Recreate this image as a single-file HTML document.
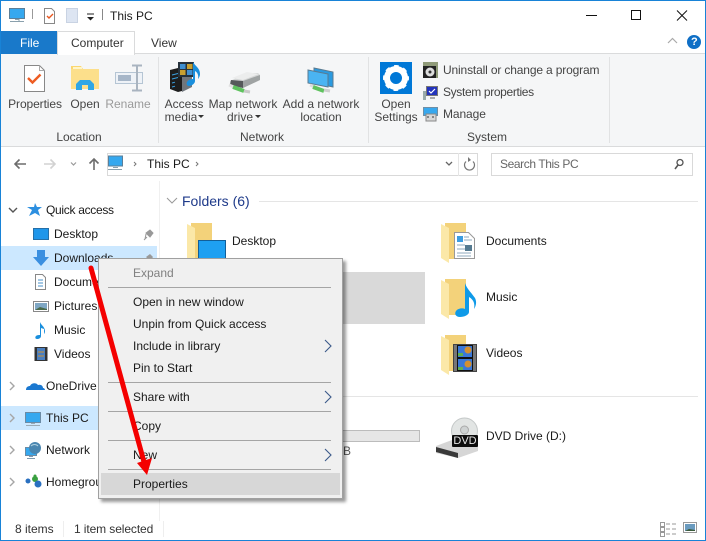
<!DOCTYPE html>
<html><head><meta charset="utf-8"><style>
html,body{margin:0;padding:0;background:#fff}
#w{position:relative;width:706px;height:541px;overflow:hidden;background:#fff;font:12px/16px "Liberation Sans",sans-serif;color:#1a1a1a}
.t{position:absolute;white-space:nowrap}
.c{position:absolute;white-space:nowrap;text-align:center;transform:translateX(-50%)}
.r{color:#444}
.b{position:absolute}
svg{position:absolute;left:0;top:0}
</style></head><body><div id="w">

<!-- ribbon backgrounds -->
<div class="b" style="left:0;top:54px;width:706px;height:92px;background:#f5f6f7;border-bottom:1px solid #dadbdc;border-top:1px solid #dadbdc;box-sizing:content-box;margin-top:-1px"></div>
<div class="b" style="left:1px;top:31px;width:56px;height:23px;background:#1979ca"></div>
<div class="b" style="left:57px;top:31px;width:78px;height:24px;background:#f5f6f7;border:1px solid #dadbdc;border-bottom:0;box-sizing:border-box"></div>
<div class="b" style="left:58px;top:32px;width:76px;height:23px;background:#fff"></div>
<div class="b" style="left:158px;top:57px;width:1px;height:86px;background:#e1e2e3"></div>
<div class="b" style="left:368px;top:57px;width:1px;height:86px;background:#e1e2e3"></div>
<div class="b" style="left:609px;top:57px;width:1px;height:86px;background:#e1e2e3"></div>

<!-- address bar -->
<div class="b" style="left:107px;top:153px;width:371px;height:22px;border:1px solid #d9d9d9;box-sizing:border-box;height:23px"></div>
<div class="b" style="left:458px;top:153px;width:1px;height:23px;background:#e5e5e5"></div>
<div class="b" style="left:491px;top:153px;width:202px;height:23px;border:1px solid #d9d9d9;box-sizing:border-box"></div>

<!-- nav selection -->
<div class="b" style="left:1px;top:246px;width:156px;height:24px;background:#cce8ff"></div>
<div class="b" style="left:1px;top:406px;width:156px;height:24px;background:#cce8ff"></div>
<div class="b" style="left:159px;top:181px;width:1px;height:340px;background:#f0f0f0"></div>

<!-- content -->
<div class="b" style="left:343px;top:272px;width:82px;height:52px;background:#d9d9d9"></div>
<div class="b" style="left:259px;top:201px;width:439px;height:1px;background:#e5e5e5"></div>
<div class="b" style="left:300px;top:396px;width:398px;height:1px;background:#e5e5e5"></div>
<div class="b" style="left:300px;top:430px;width:120px;height:12px;background:#e6e6e6;border:1px solid #bcbcbc;box-sizing:border-box"></div>
<div class="t" style="left:343px;top:443px;color:#555">B</div>

<svg width="706" height="541" viewBox="0 0 706 541" fill="none">
 <!-- title bar icons -->
 <rect x="9.5" y="8.5" width="15" height="10" fill="#35a8ef" stroke="#5b7f99"/>
 <path d="M15 19.5h4v1.5M10 21.500h14" stroke="#8aa0ad"/>
 <path d="M32.5 9v10" stroke="#999"/>
 <path d="M44.5 8.5h7l3 3v12h-10z" fill="#fff" stroke="#888"/>
 <path d="M47 16l2 2 4-4" stroke="#e8561f" stroke-width="1.4"/>
 <rect x="66.5" y="8.5" width="11" height="14" fill="#dde5f2" stroke="#c9d3e3"/>
 <path d="M87 14h7" stroke="#222"/><path d="M87 17h7l-3.5 3.5z" fill="#222"/>
 <path d="M102.5 9v11" stroke="#888"/>
 <!-- window controls -->
 <path d="M586 15.5h11" stroke="#111"/>
 <rect x="631.5" y="10.5" width="9" height="9" stroke="#111"/>
 <path d="M677 10.5l10 10M687 10.5l-10 10" stroke="#111"/>
 <path d="M668 43l4.5-4.5L677 43" stroke="#aaa" stroke-width="1.2"/>
 <circle cx="694" cy="42" r="7" fill="#0f6fc6"/>

 <!-- Properties -->
 <path d="M24.5 65.5h15l5 5v21h-20z" fill="#fff" stroke="#888"/>
 <path d="M39.5 65.5v5h5" stroke="#aaa"/>
 <path d="M28 78l4.500 4.500 8-8" stroke="#ee5c22" stroke-width="2.400"/>
 <!-- Open -->
 <path d="M71 66h10l2 3h16v20H71z" fill="#fbd770"/>
 <rect x="71" y="69" width="28" height="20" fill="#fcdf8b"/>
 <rect x="73" y="67" width="9" height="2" fill="#fff5c9"/>
 <path d="M76 90v-6l4-4h10l4 4v6h-6v-5h-6v5z" fill="#2ea6e6"/>
 <!-- Rename -->
 <rect x="115.500" y="72.500" width="27" height="11" fill="#eef2f7" stroke="#b5c5d4"/>
 <rect x="118" y="75" width="13" height="6" fill="#a6b6c8"/>
 <path d="M132 65.500h10M132 90.500h10M137 65.500v25" stroke="#a9b4c0" stroke-width="2"/>
 <!-- Access media -->
 <path d="M170 70l12-3v24l-4 1-8-3z" fill="#1d1d1d"/>
 <path d="M182 67l10 3v17l-10 5z" fill="#70767c"/>
 <rect x="178" y="62" width="16" height="15" fill="#26323c"/>
 <rect x="180" y="64" width="5.500" height="5" fill="#3f8fd0"/><rect x="187" y="64" width="5.500" height="5" fill="#c8a030"/>
 <rect x="180" y="70" width="5.500" height="5" fill="#c8a030"/><rect x="187" y="70" width="5.500" height="5" fill="#3f8fd0"/>
 <path d="M193 62c2 4 7 6 7 12 0 3-2 5-2 5 1-4-1-7-3-8v10c0 3-4 5-6 5s-3-2-2-4 4-3 6-3z" fill="#1a8fdd"/>
 <path d="M172 75l6-1.500M172 79l6-1.500M172 83l3-.8M172 87l3-.8" stroke="#3aa0e0"/>
 <!-- Map network drive -->
 <path d="M230 81l17-8h11l2 2v5l-17 8-13-3z" fill="#d4d6d6"/>
 <path d="M232 78l15-6 12 2-16 6z" fill="#eceded"/>
 <path d="M231 80l12 1v7l-13-3z" fill="#55595a"/>
 <path d="M243 81l17-6v5l-17 8z" fill="#9fa3a3"/>
 <path d="M229 85l5 2" stroke="#e0e0e0" stroke-width="3"/>
 <path d="M233 87l11 4" stroke="#5fc25f" stroke-width="4"/>
 <path d="M244 91l6 1" stroke="#c9c9c9" stroke-width="3"/>
 <!-- Add a network location -->
 <path d="M314 68l19 4v15l-19-4z" fill="#2a9ae0" stroke="#5a7a90"/>
 <path d="M308 70l20 4v13l-20-4z" fill="#4ab4f2" stroke="#5a7a90"/>
 <path d="M310 85l5 2" stroke="#dcdcdc" stroke-width="3"/>
 <path d="M313 87l11 4" stroke="#5fc25f" stroke-width="4"/>
 <path d="M324 90l6 1" stroke="#cfcfcf" stroke-width="3"/>
 <!-- Gear -->
 <rect x="380" y="62" width="32" height="32" fill="#0078d7"/>
 <circle cx="396" cy="78" r="9" stroke="#fff" stroke-width="6"/>
 <circle cx="396" cy="78" r="11.500" stroke="#fff" stroke-width="3" stroke-dasharray="4.500 4.530" stroke-dashoffset="2.200"/>
 <!-- uninstall -->
 <rect x="423" y="62" width="15" height="16" fill="#8f9a78"/>
 <rect x="423" y="66" width="13" height="12" fill="#222"/>
 <circle cx="430" cy="72" r="4.500" fill="#ddd"/><circle cx="430" cy="72" r="1.500" fill="#333"/>
 <!-- system props -->
 <rect x="426.500" y="86.500" width="11" height="9" fill="#2233bb" stroke="#777"/>
 <path d="M429 91l2 2 4-4" stroke="#fff" stroke-width="1.200"/>
 <rect x="423" y="91" width="3" height="9" fill="#9aa"/>
 <path d="M430 97h5v2h-5z" fill="#aaa"/>
 <!-- manage -->
 <rect x="423.500" y="107.500" width="14" height="8" fill="#38a8ee" stroke="#6f8ea5"/>
 <rect x="426" y="114" width="10" height="7" fill="#d8d8d8" stroke="#888"/>
 <path d="M428 116v2M433 116v2" stroke="#333"/>

 <!-- nav arrows -->
 <path d="M15 164h11M19.500 159.500l-4.500 4.500 4.500 4.500" stroke="#6d6d6d" stroke-width="1.600"/>
 <path d="M55 164H44M50.500 159.500l4.500 4.500-4.500 4.500" stroke="#d2d2d2" stroke-width="1.600"/>
 <path d="M71 162.500l2.500 2.500 2.500-2.500" stroke="#9a9a9a" stroke-width="1.200"/>
 <path d="M94 170V159M89.500 163.500l4.500-4.500 4.500 4.500" stroke="#6d6d6d" stroke-width="1.600"/>
 <!-- address -->
 <rect x="108.500" y="156" width="14" height="10" fill="#35a8ef" stroke="#5b7f99"/>
 <path d="M113 167.500h5M108 169.500h14" stroke="#8aa0ad"/>
 <path d="M134 162l2 2-2 2M196 162l2 2-2 2" stroke="#777"/>
 <path d="M446 162l3 3 3-3" stroke="#666" stroke-width="1.300"/>
 <path d="M473 161.500a5 5 0 1 1-7 0" stroke="#777" stroke-width="1.200"/><path d="M468 157l3 3-3 2z" fill="#777"/>
 <circle cx="680" cy="162.500" r="3" stroke="#555" stroke-width="1.300"/><path d="M678 165l-3 4" stroke="#555" stroke-width="1.600"/>

 <!-- nav chevrons -->
 <path d="M9 208l4 4 4-4" stroke="#555" stroke-width="1.400"/>
 <path d="M10 382l4 4-4 4M10 414l4 4-4 4M10 446l4 4-4 4M10 478l4 4-4 4" stroke="#a6a6a6" stroke-width="1.400"/>
 <!-- nav icons -->
 <path d="M35 203l-1 4-7 0 5 3-3 6 6-3 5 3-2-6 4-3h-5z" fill="#2c8fe0"/>
 <rect x="33.500" y="228.500" width="15" height="11" fill="#1f96ea" stroke="#256fa8"/>
 <path d="M37 250h8v7h4l-8 9-8-9h4z" fill="#3a8fe0"/>
 <path d="M35.500 274.500h7l3 3v12h-10z" fill="#fff" stroke="#888"/><path d="M38 280h5M38 283h5M38 286h5" stroke="#4a90c8"/>
 <rect x="33.500" y="301.500" width="15" height="10" fill="#fff" stroke="#888"/><rect x="35" y="303" width="12" height="7" fill="#7fa7c4"/><path d="M35 310l5-3 7 2v1z" fill="#4a6a4a"/>
 <path d="M40 322c1 3 5 5 5 9 0 2-1 3-1 3v-5l-3-1v8c0 2-2 3-4 3s-2-2-1-3 3-1 4-1z" fill="#1a8fdd"/>
 <rect x="34.500" y="347" width="13" height="14" fill="#333"/><rect x="37" y="348" width="8" height="12" fill="#4a7fc0"/><path d="M38 352h6M38 356h6" stroke="#d09030"/>
 <path d="M26 390c0-3 2-4 4-4 1-3 6-4 8-1 3-1 5 1 5 3 1 0 2 1 2 2z" fill="#1a78d0"/>
 <rect x="25.500" y="412.500" width="15" height="10" fill="#35a8ef" stroke="#6b8ba5"/><path d="M31 423.500h4M26 425.500h14" stroke="#9aaab5"/>
 <rect x="25.500" y="447.500" width="11" height="8" fill="#35a8ef" stroke="#6b8ba5"/><path d="M29 456.500h4M27 458.500h8" stroke="#7d9ab0"/><circle cx="35" cy="448" r="6" fill="#4a86b0"/><path d="M31 446c2-2 5-2 7 0" stroke="#aed0e0"/>
 <circle cx="28" cy="481" r="2.500" fill="#2a70c0"/><circle cx="35" cy="479" r="3" fill="#3aa040"/><circle cx="38" cy="484" r="3.500" fill="#2a70c0"/><circle cx="35" cy="476" r="1.500" fill="#3aa040"/>
 <!-- pins -->
 <path d="M146 233l4-3 3 3-3 4zM146 234l-1 5M147 237l-3 3" fill="#999" stroke="#999"/>
 <path d="M146 257l4-3 3 3-3 4z" fill="#999"/>

 <!-- folders -->
 <rect x="191" y="223" width="21" height="36" fill="#f3d27a"/><path d="M187 224l8 4v37l-8-5z" fill="#fbe8a8"/>
 <rect x="198.500" y="240.500" width="27" height="22" fill="#1ea0f2" stroke="#125f99"/>
 <rect x="445" y="223" width="21" height="36" fill="#f3d27a"/><path d="M441 224l8 4v35l-8-5z" fill="#fbe8a8"/>
 <path d="M454.500 232.500h14l6 6v20h-20z" fill="#fff" stroke="#999"/>
 <path d="M457 236h6v6h-6z" fill="#3c9ce0"/><path d="M464 237h5M464 240h8M457 245h8M457 249h8M457 253h14M457 256h14" stroke="#8fa8bc"/><rect x="465" y="245" width="7" height="6" fill="#557a90"/>
 <rect x="445" y="279" width="21" height="36" fill="#f3d27a"/><path d="M441 280l8 4v35l-8-5z" fill="#fbe8a8"/>
 <path d="M465 283c2 6 5 8 10 15 2 4 1 8-1 11 1-5 0-9-5-12v15c0 3-5 5-9 5s-6-3-4-6 7-3 9-2z" fill="#0f9ae8"/>
 <rect x="445" y="335" width="21" height="36" fill="#f3d27a"/><path d="M441 336l8 4v35l-8-5z" fill="#fbe8a8"/>
 <rect x="453.500" y="344.500" width="23" height="27" fill="#777" stroke="#444"/>
 <rect x="457" y="345" width="16" height="26" fill="#111"/>
 <rect x="458" y="346" width="14" height="11" fill="#3a78d8"/><rect x="458" y="359" width="14" height="11" fill="#3a78d8"/>
 <circle cx="468" cy="350" r="3.500" fill="#d49030"/><circle cx="468" cy="364" r="3.500" fill="#d49030"/><path d="M458 353h5v3h-5zM458 367h5v3h-5z" fill="#60b050"/>
 <!-- DVD -->
 <circle cx="464.500" cy="431" r="13" fill="#e2e5e4" stroke="#c4c8c8"/><circle cx="464.500" cy="430" r="4" fill="#cfd3d3" stroke="#aaa"/>
 <path d="M436 446l16-6h26v11l-20 7-22-5z" fill="#d6d6d6"/>
 <path d="M436 447l22 6v5l-22-6z" fill="#3a3a3a"/>
 <rect x="452" y="435" width="26" height="12" fill="#0d0d0d" rx="1"/>
 <!-- view buttons -->
 <rect x="660.500" y="522.500" width="4" height="4" stroke="#999"/><rect x="660.500" y="527.500" width="4" height="4" stroke="#999"/><rect x="660.500" y="532.500" width="4" height="4" stroke="#999"/>
 <path d="M666 524h4M672 524h4M666 529h4M672 529h4M666 534h4M672 534h4" stroke="#999"/>
 <rect x="683.500" y="522.500" width="13" height="10" fill="#fff" stroke="#999"/><rect x="685" y="524" width="10" height="7" fill="#6a9bbf"/><path d="M685 531l4-2 6 1v1z" fill="#3a5a3a"/>
</svg>

<!-- title + tabs -->
<div class="t" style="left:110px;top:8px">This PC</div>
<div class="t" style="left:20px;top:35px;color:#fff">File</div>
<div class="t" style="left:71px;top:35px;color:#333">Computer</div>
<div class="t" style="left:151px;top:35px;color:#333">View</div>
<div class="t" style="left:691px;top:34px;color:#fff;font-weight:bold;font-size:11px">?</div>

<!-- ribbon text -->
<div class="c r" style="left:35px;top:96px;letter-spacing:-.1px">Properties</div>
<div class="c r" style="left:85px;top:96px">Open</div>
<div class="c" style="left:128px;top:96px;color:#9a9a9a">Rename</div>
<div class="c r" style="left:79px;top:129px">Location</div>
<div class="c r" style="left:184px;top:96px">Access</div>
<div class="c r" style="left:181px;top:109px">media</div>
<div class="c r" style="left:243px;top:96px">Map network</div>
<div class="c r" style="left:240px;top:109px">drive</div>
<div class="c r" style="left:321px;top:96px">Add a network</div>
<div class="c r" style="left:321px;top:109px">location</div>
<div class="c r" style="left:262px;top:129px">Network</div>
<div class="c r" style="left:396px;top:96px">Open</div>
<div class="c r" style="left:396px;top:109px">Settings</div>
<div class="t r" style="left:443px;top:62px;letter-spacing:-.15px">Uninstall or change a program</div>
<div class="t r" style="left:443px;top:84px;letter-spacing:-.35px">System properties</div>
<div class="t r" style="left:443px;top:106px;letter-spacing:-.1px">Manage</div>
<div class="c r" style="left:487px;top:129px">System</div>
<svg width="706" height="541" viewBox="0 0 706 541"><path d="M198 115h6l-3 3zM255 115h6l-3 3z" fill="#333"/></svg>

<!-- address text -->
<div class="t" style="left:147px;top:156px">This PC</div>
<div class="t" style="left:500px;top:156px;color:#666;letter-spacing:-.4px">Search This PC</div>

<!-- nav text -->
<div class="t" style="left:46px;top:202px;letter-spacing:-.3px">Quick access</div>
<div class="t" style="left:54px;top:226px">Desktop</div>
<div class="t" style="left:54px;top:250px">Downloads</div>
<div class="t" style="left:54px;top:274px">Documents</div>
<div class="t" style="left:54px;top:298px">Pictures</div>
<div class="t" style="left:54px;top:322px">Music</div>
<div class="t" style="left:54px;top:346px">Videos</div>
<div class="t" style="left:46px;top:378px">OneDrive</div>
<div class="t" style="left:46px;top:410px">This PC</div>
<div class="t" style="left:46px;top:442px">Network</div>
<div class="t" style="left:46px;top:474px">Homegroup</div>

<!-- content text -->
<svg width="706" height="541" viewBox="0 0 706 541" fill="none"><path d="M167 198l5 5 5-5" stroke="#999"/></svg>
<div class="t" style="left:182px;top:193px;font-size:14px;color:#1e3a8a">Folders (6)</div>
<div class="t" style="left:232px;top:233px">Desktop</div>
<div class="t" style="left:486px;top:233px">Documents</div>
<div class="t" style="left:486px;top:289px">Music</div>
<div class="t" style="left:486px;top:345px">Videos</div>
<div class="t" style="left:486px;top:428px">DVD Drive (D:)</div>
<div class="b" style="left:452px;top:436px;width:26px;color:#e8e8e8;font-size:11px;line-height:11px;text-align:center">DVD</div>

<!-- status -->
<div class="t" style="left:15px;top:521px;color:#333">8 items</div>
<div class="t" style="left:74px;top:521px;color:#333;letter-spacing:-.1px">1 item selected</div>
<div class="b" style="left:63px;top:521px;width:1px;height:16px;background:#eee"></div>
<div class="b" style="left:163px;top:521px;width:1px;height:16px;background:#eee"></div>

<!-- context menu -->
<div class="b" style="left:98px;top:258px;width:245px;height:241px;background:#f0f0f0;border:1px solid #a0a0a0;box-sizing:border-box;box-shadow:3px 3px 3px rgba(0,0,0,.4)">
 <div class="b" style="left:2px;top:214px;width:239px;height:22px;background:#d7d7d7"></div>
 <div class="t" style="left:34px;top:6px;color:#808080">Expand</div>
 <div class="b" style="left:9px;top:28px;width:223px;height:1px;background:#a5a5a5"></div>
 <div class="t" style="left:34px;top:35px">Open in new window</div>
 <div class="t" style="left:34px;top:57px">Unpin from Quick access</div>
 <div class="t" style="left:34px;top:79px">Include in library</div>
 <div class="t" style="left:34px;top:101px">Pin to Start</div>
 <div class="b" style="left:9px;top:123px;width:223px;height:1px;background:#a5a5a5"></div>
 <div class="t" style="left:34px;top:130px">Share with</div>
 <div class="b" style="left:9px;top:152px;width:223px;height:1px;background:#a5a5a5"></div>
 <div class="t" style="left:34px;top:159px">Copy</div>
 <div class="b" style="left:9px;top:181px;width:223px;height:1px;background:#a5a5a5"></div>
 <div class="t" style="left:34px;top:188px">New</div>
 <div class="b" style="left:9px;top:210px;width:223px;height:1px;background:#a5a5a5"></div>
 <div class="t" style="left:34px;top:217px">Properties</div>
</div>
<svg width="706" height="541" viewBox="0 0 706 541" fill="none">
 <path d="M325 340l6 6-6 6M325 391l6 6-6 6M325 449l6 6-6 6" stroke="#3c5a8a" stroke-width="1.100"/>
 <path d="M91 268L144 462" stroke="#f40000" stroke-width="5" stroke-linecap="round"/>
 <path d="M137 463l15-5-5 17z" fill="#f40000"/>
</svg>

<!-- window border -->
<div class="b" style="left:0;top:0;width:706px;height:541px;border:1px solid #1883d7;box-sizing:border-box"></div>
</div></body></html>
